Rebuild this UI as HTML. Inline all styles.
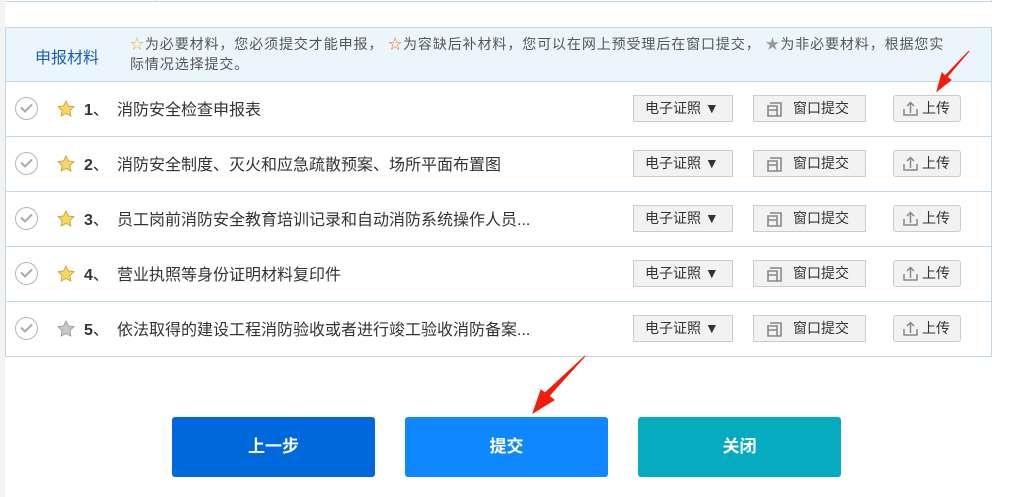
<!DOCTYPE html>
<html><head><meta charset="utf-8"><style>
*{margin:0;padding:0;box-sizing:border-box}
body{width:1028px;height:497px;background:#fff;position:relative;overflow:hidden;font-family:"Liberation Sans","Noto Sans CJK SC",sans-serif;color:#333}
.abs{position:absolute}
.hdr{left:5px;top:27px;width:987px;height:55px;background:#eaf5fc;border:1px solid #c1d7e8}
.row{left:5px;width:987px;height:55px;border:1px solid #c1d7e8;border-top:none}
.chk{position:absolute;left:9px;top:15px;width:23px;height:23px;border:1.5px solid #b5b5b5;border-radius:50%}
.chk svg{position:absolute;left:4px;top:5px}
.num{position:absolute;left:78px;top:14px;font-size:16px;font-weight:bold;color:#333}
.num span{font-weight:normal}
.txt{position:absolute;left:111px;top:14px;font-size:16px;color:#333}
.b{position:absolute;top:13px;height:27px;background:#f2f2f2;border:1px solid #ccc;font-size:14px;line-height:25px;color:#333}
.b1{left:627px;width:100px;padding-left:11px}
.b2{left:747px;width:113px;padding-left:39px}
.b3{left:887px;width:68px;padding-left:28px;border-radius:3px}
.big{top:417px;width:203px;height:60px;border-radius:3px;color:#fff;font-weight:bold;font-size:17px;text-align:center;line-height:60px}
</style></head><body>
<div class="abs" style="left:0;top:0;width:5px;height:497px;background:#f3f3f3"></div>
<div class="abs" style="left:5px;top:1px;width:987px;height:1px;background:#c1d7e8"></div>
<div class="abs" style="left:991px;top:0;width:1px;height:2px;background:#c1d7e8"></div>
<div class="abs" style="left:156px;top:0;width:1px;height:2px;background:#c1d7e8"></div>

<div class="abs hdr">
<div class="abs" style="left:29px;top:16px;font-size:16px;color:#1a5fb4">申报材料</div>
<div class="abs" style="left:124px;top:6px;width:828px;font-size:14px;line-height:20px;color:#555;letter-spacing:0.9px">
<span style="color:#e8b820">☆</span>为必要材料，您必须提交才能申报， <span style="color:#f07030">☆</span>为容缺后补材料，您可以在网上预受理后在窗口提交， <span style="color:#999">★</span>为非必要材料，根据您实际情况选择提交。</div>
</div>

<div class="abs row" style="top:82px"><div class="chk"><svg width="13" height="10"><path d="M1 4.5l4 4 7-7" fill="none" stroke="#aaa" stroke-width="2"/></svg></div><svg class="abs" style="left:51px;top:18px" width="18" height="18" viewBox="0 0 20 20"><path d="M10 1l2.7 5.6 6.1.8-4.5 4.3 1.1 6.1L10 14.9 4.6 17.8l1.1-6.1L1.2 7.4l6.1-.8z" fill="#f6d860" stroke="#c8a040"/></svg><div class="num">1<span>、</span></div><div class="txt">消防安全检查申报表</div>
<div class="b b1">电子证照 ▼</div><div class="b b2"><svg class="abs" style="left:13px;top:6px" width="16" height="15"><path d="M3 1h11v13h-5M1 4h9v10H1zM1 8h9" fill="none" stroke="#888" stroke-width="1.6"/></svg>窗口提交</div><div class="b b3"><svg class="abs" style="left:9px;top:5px" width="16" height="16"><path d="M1 8v6h13V8M7.5 12V2M4 5l3.5-3.5L11 5" fill="none" stroke="#888" stroke-width="1.5"/></svg>上传</div></div>

<div class="abs row" style="top:137px"><div class="chk"><svg width="13" height="10"><path d="M1 4.5l4 4 7-7" fill="none" stroke="#aaa" stroke-width="2"/></svg></div><svg class="abs" style="left:51px;top:18px" width="18" height="18" viewBox="0 0 20 20"><path d="M10 1l2.7 5.6 6.1.8-4.5 4.3 1.1 6.1L10 14.9 4.6 17.8l1.1-6.1L1.2 7.4l6.1-.8z" fill="#f6d860" stroke="#c8a040"/></svg><div class="num">2<span>、</span></div><div class="txt">消防安全制度、灭火和应急疏散预案、场所平面布置图</div>
<div class="b b1">电子证照 ▼</div><div class="b b2"><svg class="abs" style="left:13px;top:6px" width="16" height="15"><path d="M3 1h11v13h-5M1 4h9v10H1zM1 8h9" fill="none" stroke="#888" stroke-width="1.6"/></svg>窗口提交</div><div class="b b3"><svg class="abs" style="left:9px;top:5px" width="16" height="16"><path d="M1 8v6h13V8M7.5 12V2M4 5l3.5-3.5L11 5" fill="none" stroke="#888" stroke-width="1.5"/></svg>上传</div></div>

<div class="abs row" style="top:192px"><div class="chk"><svg width="13" height="10"><path d="M1 4.5l4 4 7-7" fill="none" stroke="#aaa" stroke-width="2"/></svg></div><svg class="abs" style="left:51px;top:18px" width="18" height="18" viewBox="0 0 20 20"><path d="M10 1l2.7 5.6 6.1.8-4.5 4.3 1.1 6.1L10 14.9 4.6 17.8l1.1-6.1L1.2 7.4l6.1-.8z" fill="#f6d860" stroke="#c8a040"/></svg><div class="num">3<span>、</span></div><div class="txt">员工岗前消防安全教育培训记录和自动消防系统操作人员...</div>
<div class="b b1">电子证照 ▼</div><div class="b b2"><svg class="abs" style="left:13px;top:6px" width="16" height="15"><path d="M3 1h11v13h-5M1 4h9v10H1zM1 8h9" fill="none" stroke="#888" stroke-width="1.6"/></svg>窗口提交</div><div class="b b3"><svg class="abs" style="left:9px;top:5px" width="16" height="16"><path d="M1 8v6h13V8M7.5 12V2M4 5l3.5-3.5L11 5" fill="none" stroke="#888" stroke-width="1.5"/></svg>上传</div></div>

<div class="abs row" style="top:247px"><div class="chk"><svg width="13" height="10"><path d="M1 4.5l4 4 7-7" fill="none" stroke="#aaa" stroke-width="2"/></svg></div><svg class="abs" style="left:51px;top:18px" width="18" height="18" viewBox="0 0 20 20"><path d="M10 1l2.7 5.6 6.1.8-4.5 4.3 1.1 6.1L10 14.9 4.6 17.8l1.1-6.1L1.2 7.4l6.1-.8z" fill="#f6d860" stroke="#c8a040"/></svg><div class="num">4<span>、</span></div><div class="txt">营业执照等身份证明材料复印件</div>
<div class="b b1">电子证照 ▼</div><div class="b b2"><svg class="abs" style="left:13px;top:6px" width="16" height="15"><path d="M3 1h11v13h-5M1 4h9v10H1zM1 8h9" fill="none" stroke="#888" stroke-width="1.6"/></svg>窗口提交</div><div class="b b3"><svg class="abs" style="left:9px;top:5px" width="16" height="16"><path d="M1 8v6h13V8M7.5 12V2M4 5l3.5-3.5L11 5" fill="none" stroke="#888" stroke-width="1.5"/></svg>上传</div></div>

<div class="abs row" style="top:302px"><div class="chk"><svg width="13" height="10"><path d="M1 4.5l4 4 7-7" fill="none" stroke="#aaa" stroke-width="2"/></svg></div><svg class="abs" style="left:51px;top:18px" width="18" height="18" viewBox="0 0 20 20"><path d="M10 1l2.7 5.6 6.1.8-4.5 4.3 1.1 6.1L10 14.9 4.6 17.8l1.1-6.1L1.2 7.4l6.1-.8z" fill="#c8c8c8" stroke="#999"/></svg><div class="num">5<span>、</span></div><div class="txt">依法取得的建设工程消防验收或者进行竣工验收消防备案...</div>
<div class="b b1">电子证照 ▼</div><div class="b b2"><svg class="abs" style="left:13px;top:6px" width="16" height="15"><path d="M3 1h11v13h-5M1 4h9v10H1zM1 8h9" fill="none" stroke="#888" stroke-width="1.6"/></svg>窗口提交</div><div class="b b3"><svg class="abs" style="left:9px;top:5px" width="16" height="16"><path d="M1 8v6h13V8M7.5 12V2M4 5l3.5-3.5L11 5" fill="none" stroke="#888" stroke-width="1.5"/></svg>上传</div></div>

<div class="abs big" style="left:172px;background:#0068dd">上一步</div>
<div class="abs big" style="left:405px;background:#0f87fe">提交</div>
<div class="abs big" style="left:638px;background:#06abbf">关闭</div>

<svg class="abs" style="left:0;top:0" width="1028" height="497">
<path d="M969 51L947 77 951 80 937 91 942 73 945 76z" fill="#f21d0f" stroke="#f21d0f" stroke-width="1"/>
<path d="M585 356L549 396 554 400 533 413 541 390 545 393z" fill="#f21d0f" stroke="#f21d0f" stroke-width="1"/>
</svg>
</body></html>
